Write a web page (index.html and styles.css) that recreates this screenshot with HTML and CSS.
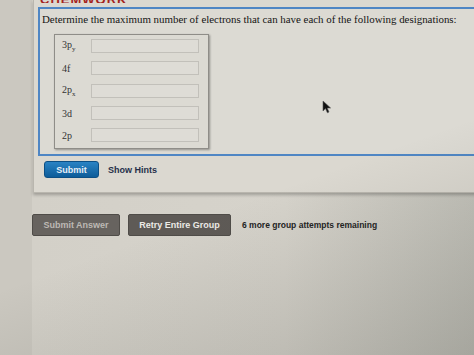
FILE: index.html
```html
<!DOCTYPE html>
<html lang="en">

<head>
    <meta charset="UTF-8" />
    <meta name="viewport" content="width=device-width, initial-scale=1.0" />
    <title>ChemWork</title>
    <link rel="stylesheet" href="styles.css">
</head>

<body>
    <div class="page">
        <div class="panel">
            <div class="brand">CHEMWORK</div>

            <div class="question">
                <p class="prompt">Determine the maximum number of electrons that can have each of the following designations:</p>

                <div class="answers">
                    <div class="row">
                        <span class="label">3p<sub>y</sub></span>
                        <input type="text" />
                    </div>
                    <div class="row">
                        <span class="label">4f</span>
                        <input type="text" />
                    </div>
                    <div class="row">
                        <span class="label">2p<sub>x</sub></span>
                        <input type="text" />
                    </div>
                    <div class="row">
                        <span class="label">3d</span>
                        <input type="text" />
                    </div>
                    <div class="row">
                        <span class="label">2p</span>
                        <input type="text" />
                    </div>
                </div>
            </div>

            <div class="actions">
                <button class="btn-blue">Submit</button>
                <span class="hints">Show Hints</span>
            </div>
        </div>

        <div class="group">
            <button class="btn-gray disabled">Submit Answer</button>
            <button class="btn-gray">Retry Entire Group</button>
            <span class="remaining">6 more group attempts remaining</span>
        </div>
    </div>

    <!-- mouse pointer -->
    <svg class="pointer" width="10" height="14" viewBox="0 0 10 14">
        <path d="M1 1 L1 11 L3.5 8.6 L5.4 12.8 L7 12 L5.2 8 L8.6 8 Z" fill="#111" stroke="#555" stroke-width="0.6" />
    </svg>
</body>

</html>
```

FILE: styles.css
```css
html,
body {
    margin: 0;
    height: 100%;
    overflow: hidden;
}

body {
    font-family: "Liberation Sans", Arial, sans-serif;
    background: linear-gradient(90deg, #cbc8c0 0px, #cbc8c0 32px, #d3d0c8 32px, #d6d3cb 60%, #c4c3bb 100%);
    position: relative;
}

/* bottom right of the photo is darker */
body::after {
    content: "";
    position: absolute;
    inset: 0;
    background: linear-gradient(160deg, rgba(0, 0, 0, 0) 55%, rgba(60, 62, 55, 0.22) 100%);
    pointer-events: none;
}

.page {
    padding-left: 33px;
}

.panel {
    width: 520px;
    background: #dbd8d0;
    border-left: 1px solid #b9b6ae;
    border-bottom: 1px solid #b9b6ae;
    box-shadow: 0 2px 3px rgba(0, 0, 0, 0.25);
    padding: 0 0 14px 4px;
}

/* title of the page, scrolled mostly out of view */
.brand {
    height: 3px;
    overflow: hidden;
    color: #a3241d;
    font-weight: bold;
    font-size: 13px;
    line-height: 0;
    padding-left: 2px;
    letter-spacing: 1px;
}

.question {
    margin-top: 4px;
    border: 2px solid #4f86c4;
    border-right: none;
    background: #dcdad3;
    padding: 2px 0 5px 2px;
}

.prompt {
    margin: 0;
    font-family: "Liberation Serif", "Times New Roman", serif;
    font-size: 10.9px;
    line-height: 16px;
    color: #141414;
}

.answers {
    width: 153px;
    margin: 7px 0 0 12px;
    border: 1px solid #8f8d88;
    box-shadow: 1px 1px 2px rgba(0, 0, 0, 0.35);
    padding: 0 0 2px 0;
}

.row {
    display: flex;
    align-items: center;
    height: 22.3px;
}

.label {
    width: 36px;
    padding-left: 7px;
    box-sizing: border-box;
    font-family: "Liberation Serif", "Times New Roman", serif;
    font-size: 10px;
    color: #333;
}

.label sub {
    font-size: 7px;
}

.row input {
    width: 108px;
    height: 14px;
    box-sizing: border-box;
    margin: 0;
    border: 1px solid #c2c0ba;
    background: #dedcd6;
}

.actions {
    display: flex;
    align-items: center;
    gap: 9px;
    margin: 5px 0 0 6px;
}

.btn-blue {
    width: 55px;
    height: 17px;
    padding: 0;
    border: 1px solid #0c4f85;
    border-radius: 3px;
    background: linear-gradient(#2a83c4, #0d5c99);
    color: #e6eef6;
    font-family: inherit;
    font-size: 9px;
    font-weight: bold;
}

.hints {
    font-size: 9px;
    font-weight: bold;
    color: #26304a;
}

.group {
    display: flex;
    align-items: center;
    margin-top: 21px;
    margin-left: -1px;
}

.btn-gray {
    height: 22px;
    padding: 0;
    margin-right: 8px;
    border: 1px solid #4f4c48;
    border-radius: 2px;
    background: #5e5a56;
    color: #eceae6;
    font-family: inherit;
    font-size: 9px;
    font-weight: bold;
    width: 103px;
}

.btn-gray.disabled {
    width: 88px;
    background: #67635f;
    color: #bdb9b4;
}

.remaining {
    margin-left: 3px;
    font-size: 8.5px;
    font-weight: bold;
    color: #222;
}

.pointer {
    position: absolute;
    left: 322px;
    top: 100px;
}
```
